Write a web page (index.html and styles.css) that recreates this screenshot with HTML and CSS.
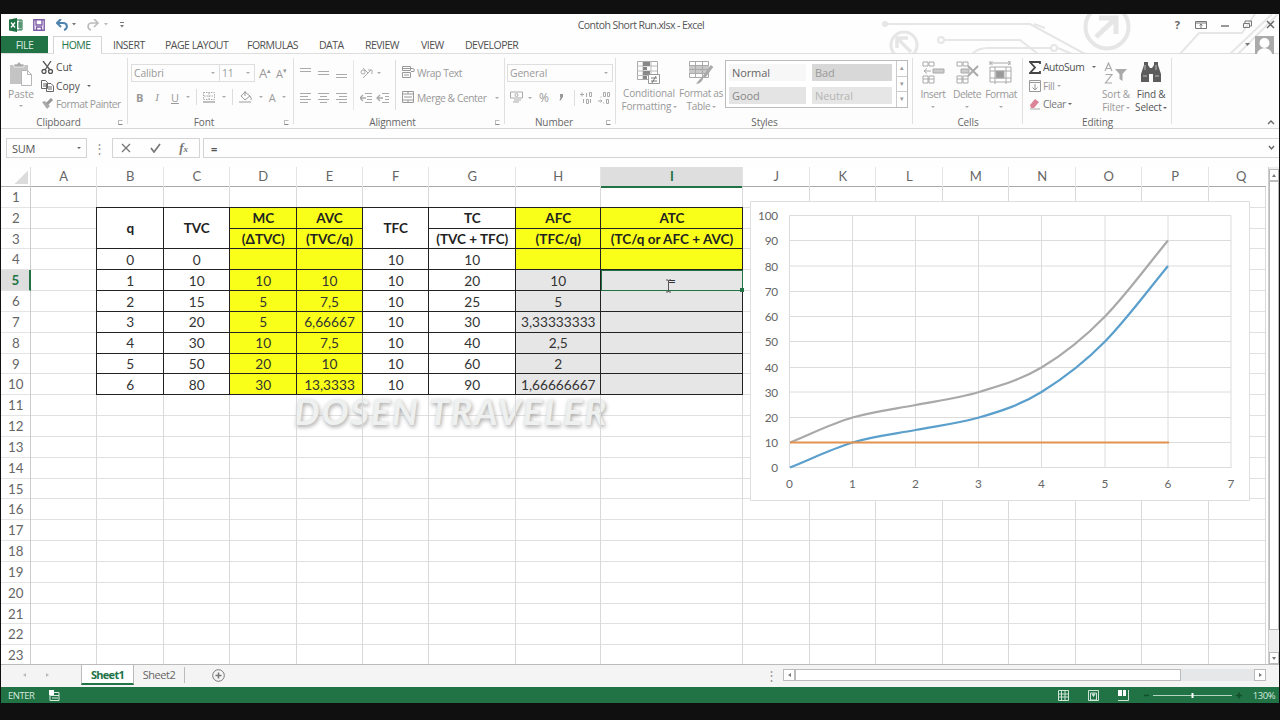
FILE: index.html
```html
<!DOCTYPE html>
<html lang="en">
<head>
<meta charset="utf-8">
<title>Contoh Short Run.xlsx - Excel</title>
<link rel="stylesheet" href="styles.css">
</head>
<body>
<div class="app">
  <header class="top">
    <svg class="circuit" width="400" height="40" viewBox="0 0 400 40" fill="none" stroke="#e6e6e6" stroke-width="2">
      <circle cx="24" cy="31" r="13" stroke-width="3"/><path d="M31 38 18 25M17 34V24H28" stroke-width="3.5"/>
      <path d="M5 10H150L205 40M64 26H140L158 40M92 40Q98 34 108 34H170M178 34 192 40M154 10 165 14"/>
      <circle cx="61" cy="26" r="3"/><circle cx="174" cy="34" r="3"/><circle cx="5" cy="10" r="3" fill="#e6e6e6" stroke="none"/>
      <circle cx="227" cy="13" r="21.500" stroke-width="4"/><path d="M216 23 235 5M219 4H236V20" stroke-width="5"/>
      <path d="M300 40 319 19H362L375 0M350 40 392 0M358 40 398 0"/>
    </svg>
    <div class="titlebar">
      <div class="quick">
        <svg width="14" height="14" viewBox="0 0 14 14"><path d="M7 2h6v10H7z" fill="#fff" stroke="#217346"/><path d="M9 5h4M9 7h4M9 9h4M11 2v10" stroke="#217346"/><path d="M0 1.500 8 0v14L0 12.500z" fill="#217346"/><path d="m2 4.500 4 5M6 4.500l-4 5" stroke="#fff" stroke-width="1.300"/></svg>
        <svg width="12" height="12" viewBox="0 0 12 12" fill="none" stroke="#7d5ba6" stroke-width="1.400"><path d="M.8.8h10.400v10.400H.8zM3 1v5h6V1M3.500 11V8h5v3"/></svg>
        <svg width="22" height="12" viewBox="0 0 22 12"><path d="M1 4h6c5 0 5 6 1 7M5 0 1 4l4 4" fill="none" stroke="#4f83ad" stroke-width="2"/><path d="m16 4 2 2.500L20 4z" fill="#777"/></svg>
        <svg width="22" height="12" viewBox="0 0 22 12"><path d="M11 4H5C0 4 0 10 4 11M7 0l4 4-4 4" fill="none" stroke="#bcbcbc" stroke-width="1.700"/><path d="m17 4 2 2.500L21 4z" fill="#bbb"/></svg>
        <svg width="6" height="8" viewBox="0 0 6 8"><path d="M1 1.500h4" stroke="#777"/><path d="M1 4h4L3 6.500z" fill="#777"/></svg>
      </div>
      <div class="doc">Contoh Short Run.xlsx - Excel</div>
      <div class="winctl">
        <b>?</b>
        <svg width="12" height="8" viewBox="0 0 12 8" fill="none" stroke="#777"><path d="M.5.5h11v7H.5zM.5 2h11M6 7V3M4.500 4.500 6 3l1.500 1.500"/></svg>
        <svg width="8" height="8" viewBox="0 0 8 8"><path d="M0 5h8" stroke="#777" stroke-width="1.500"/></svg>
        <svg width="9" height="9" viewBox="0 0 9 9" fill="none" stroke="#777"><path d="M.5 3.500h6v4h-6zM2 3V1h6.500v5H7"/></svg>
        <svg width="9" height="9" viewBox="0 0 9 9"><path d="m1 1 7 7M8 1 1 8" stroke="#666" stroke-width="1.400"/></svg>
      </div>
    </div>
    <nav class="tabs">
      <span class="file">FILE</span><span class="home">HOME</span><span class="t3">INSERT</span><span class="t4">PAGE LAYOUT</span><span class="t5">FORMULAS</span><span class="t6">DATA</span><span class="t7">REVIEW</span><span class="t8">VIEW</span><span class="t9">DEVELOPER</span>
      <svg class="user" width="30" height="20" viewBox="0 0 30 20"><path d="m0 8 2.500 3L5 8z" fill="#777"/><path d="M10 1h19v19H10z" fill="#aaa"/><circle cx="19.500" cy="8" r="5" fill="#fff"/><path d="M12 20c0-9 15-9 15 0z" fill="#fff"/></svg>
    </nav>
  </header>

  <section class="ribbon">
    <div class="group g-clip">
      <div class="body">
        <div class="big paste">
          <svg width="24" height="26" viewBox="0 0 24 26"><path d="M1 4h18v19H1z" fill="#c4c4c4"/><path d="M5 6V3h3q2-4 4 0h3v3z" fill="#aaa" stroke="#fff" stroke-width=".7"/><path d="M12.500 9.500h6l4 4v11h-10zM18.500 9.500v4h4" fill="#fff" stroke="#b5b5b5"/></svg>
          <span>Paste</span><i class="dn"></i>
        </div>
        <div class="stack">
          <div class="row dark"><svg width="13" height="13" viewBox="0 0 13 13" fill="none" stroke="#555" stroke-width="1.300"><path d="m2 0 7 9M10 0 4 9"/><circle cx="3" cy="10.500" r="2"/><circle cx="9.500" cy="10.500" r="2"/></svg><span>Cut</span></div>
          <div class="row dark"><svg width="13" height="12" viewBox="0 0 13 12" fill="#fff" stroke="#666"><path d="M.5.5h4l2 2v6h-6zM5.500 3.500h4.500l2.500 2.500v5.500h-7zM2 4h3M2 6h3M7 7h4M7 9h4"/></svg><span>Copy</span><i class="dn k"></i></div>
          <div class="row fp"><svg width="13" height="12" viewBox="0 0 13 12"><path d="m1 4 3-1 5 5-3 3z" fill="#aaa"/><path d="m6 6 5-5" stroke="#999" stroke-width="3"/></svg><span>Format Painter</span></div>
        </div>
      </div>
      <div class="label">Clipboard</div><i class="launch"></i>
    </div>

    <div class="group g-font">
      <div class="body col">
        <div class="row r1"><div class="combo fname">Calibri<i class="dn"></i></div><div class="combo fsize">11<i class="dn"></i></div><span class="grow">A<sup>▴</sup></span><span class="shrink">A<sup>▾</sup></span></div>
        <div class="row r2"><b>B</b><em>I</em><u>U</u><i class="dn"></i><i class="vr"></i>
          <svg width="12" height="11" viewBox="0 0 12 11" fill="none" stroke="#aaa"><path d="M.5.500h11v7H.5zM6 1v6M1 4h10" stroke-dasharray="1.500 1"/><path d="M0 10h12" stroke-width="1.500"/></svg><i class="dn"></i><i class="vr"></i>
          <svg width="13" height="12" viewBox="0 0 13 12" fill="none" stroke="#999"><path d="m6 1 5 4-5 4-4-4zM6 5V0M11 5q2 3 1 4"/><path d="M0 11h12" stroke="#ccc" stroke-width="2"/></svg><i class="dn"></i>
          <span class="fc">A</span><i class="dn"></i></div>
      </div>
      <div class="label">Font</div><i class="launch"></i>
    </div>

    <div class="group g-align">
      <div class="body">
        <div class="acol a1">
          <div class="row"><svg width="48" height="12" viewBox="0 0 48 12" stroke="#aaa"><path d="M0 1.500h11M0 4.500h11M18 4.500h11M18 7.500h11M36 7.500h11M36 10.500h11"/></svg></div>
          <div class="row"><svg width="48" height="10" viewBox="0 0 48 10" stroke="#aaa"><path d="M0 .5h11M0 3.500h8M0 6.500h11M0 9.500h8M18 .5h11M20 3.500h7M18 6.500h11M20 9.500h7M36 .5h11M39 3.500h8M36 6.500h11M39 9.500h8"/></svg></div>
        </div>
        <div class="acol a2">
          <div class="row"><svg width="14" height="12" viewBox="0 0 14 12" fill="none" stroke="#aaa"><path d="m3 11 8-8M8 3h4v4"/><circle cx="3" cy="5" r="2"/><path d="m3 1 5 5"/></svg><i class="dn"></i></div>
          <div class="row"><svg width="30" height="10" viewBox="0 0 30 10" stroke="#aaa" fill="none"><path d="M5 .5h7M7 3.500h5M7 6.500h5M5 9.500h7M22 .5h7M25 3.500h4M25 6.500h4M22 9.500h7"/><path d="M0 5h6M3 2 0 5l3 3M17 5h6M20 2l-3 3 3 3" stroke-width="1.300"/></svg></div>
        </div>
        <div class="acol a3">
          <div class="row"><svg width="13" height="13" viewBox="0 0 13 13" fill="none" stroke="#999"><path d="M.5.500h8v4h-8zM.5 6.500h8v5h-8zM0 2.500h11q2 0 1 3H9M2 9h5"/></svg><span>Wrap Text</span></div>
          <div class="row"><svg width="13" height="13" viewBox="0 0 13 13" fill="none" stroke="#999"><path d="M.5.500h11v11H.5zM.5 3h11M.5 9h11M6 0v3M6 9v3M2 6h8"/></svg><span>Merge &amp; Center</span><i class="dn"></i></div>
        </div>
      </div>
      <div class="label">Alignment</div><i class="launch"></i>
    </div>

    <div class="group g-num">
      <div class="body col">
        <div class="combo gen">General<i class="dn"></i></div>
        <div class="row nr"><svg width="13" height="13" viewBox="0 0 13 13" fill="none" stroke="#aaa"><path d="M.5 1h12v6H.5z"/><circle cx="6.500" cy="4" r="1.500"/><path d="M4 9h7M3 11h6"/></svg><i class="dn"></i><b class="pct">%</b><svg class="comma" width="4" height="7" viewBox="0 0 4 7"><path d="M1 0h3v3L1.500 6.500H.5L1.500 3H1z" fill="#999"/></svg><i class="vr"></i>
          <svg class="dec" width="12" height="12" viewBox="0 0 12 12" fill="none" stroke="#aaa"><path d="M0 2.500h4M2 .5v4M6.500 1v4M9.500.5h2v4h-2zM3.500 7v4M6.500 7.500h2v4h-2zM10.500 7v4"/></svg>
          <svg class="dec" width="12" height="12" viewBox="0 0 12 12" fill="none" stroke="#aaa"><path d="M3 4.500v1M5.500.5h2v4h-2zM9.500.5h2v4h-2zM0 9h4M2.500 7.500 4 9l-1.500 1.500M5.500 10.500v1M8.500 7.500h2v4h-2z"/></svg></div>
      </div>
      <div class="label">Number</div><i class="launch"></i>
    </div>

    <div class="group g-styles">
      <div class="body">
        <div class="big cf"><svg width="24" height="24" viewBox="0 0 24 24"><path d="M.5.500h20v18H.5z" fill="#fff" stroke="#aaa"/><path d="M0 5h20M0 10h20M0 14.500h20M6 0v18M14 0v18" stroke="#bbb"/><path d="M6 1h7v4H6zM6 6h4v3H6zM6 10h7v4H6zM6 15h4v3H6z" fill="#888"/><path d="M11.500 13.500h11v9h-11z" fill="#fff" stroke="#999"/><path d="M14 17h6M14 20h6M19 15l-4 7" stroke="#777"/></svg><span>Conditional<br>Formatting <i class="dn in"></i></span></div>
        <div class="big ft"><svg width="24" height="24" viewBox="0 0 24 24"><path d="M.5.500h19v16H.5z" fill="#fff" stroke="#aaa"/><path d="M0 5h20v7H0z" fill="#c8c8c8"/><path d="M0 4.500h20M0 8.500h20M0 12.500h20M6.500 0v17M13.500 0v17" stroke="#aaa"/><path d="m23 5-8 11" stroke="#aaa" stroke-width="3"/><path d="M15 15q-2 8-8 8 4-6 8-8" fill="#aaa"/></svg><span>Format as<br>Table <i class="dn in"></i></span></div>
        <div class="gallery">
          <div class="swatches"><span class="s1">Normal</span><span class="s2">Bad</span><span class="s3">Good</span><span class="s4">Neutral</span></div>
          <div class="scroller"><i>▴</i><i>▾</i><i>▾</i></div>
        </div>
      </div>
      <div class="label">Styles</div>
    </div>

    <div class="group g-cells">
      <div class="body">
        <div class="big"><svg width="23" height="24" viewBox="0 0 23 24" fill="#fff" stroke="#aaa"><path d="M1 1h5v4H1zM7 1h5v4H7zM1 15h5v7H1zM7 15h5v7H7zM1 18h11"/><path d="M11 8h11v4H11z" fill="#ccc"/><path d="M9 10H2M5 7.500 2 10l3 2.500"/></svg><span>Insert</span><i class="dn"></i></div>
        <div class="big"><svg width="23" height="24" viewBox="0 0 23 24" fill="#fff" stroke="#aaa"><path d="M1 1h5v4H1zM7 1h5v4H7zM1 15h5v7H1zM7 15h5v7H7zM1 18h11"/><path d="M5 8h8v4H5z" fill="#ccc"/><path d="m12 5 10 10M22 5 12 15" stroke-width="2"/></svg><span>Delete</span><i class="dn"></i></div>
        <div class="big"><svg width="24" height="24" viewBox="0 0 24 24" fill="#fff" stroke="#aaa"><path d="M1 2h20M1 0v4M21 0v4M3.500.500 1.500 2l2 2M19 0l2 2-2 2"/><path d="M1 6h21v15H1zM1 10h21M1 17h21M6 6v17M17 6v17"/><path d="M7 10h8v7H7z" fill="#999"/></svg><span>Format</span><i class="dn"></i></div>
      </div>
      <div class="label">Cells</div>
    </div>

    <div class="group g-edit">
      <div class="body">
        <div class="stack">
          <div class="row dark"><svg width="12" height="13" viewBox="0 0 12 13"><path d="M11 3V1H1l5 5.500L1 12h10v-2" fill="none" stroke="#444" stroke-width="1.800"/></svg><span>AutoSum</span><i class="dn k far"></i></div>
          <div class="row"><svg width="12" height="12" viewBox="0 0 12 12" fill="none" stroke="#999"><path d="M.5.500h11v11H.5zM.5 2.500h11M6 4v6M3.500 7.500 6 10l2.500-2.500"/></svg><span>Fill</span><i class="dn"></i></div>
          <div class="row mid"><svg width="12" height="11" viewBox="0 0 12 11"><path d="m1 6 5-6 4 3-5 6-3 0z" fill="#dc8497"/><path d="M1 10h10" stroke="#aaa"/></svg><span>Clear</span><i class="dn k"></i></div>
        </div>
        <div class="big sort"><svg width="24" height="22" viewBox="0 0 24 22" fill="none" stroke="#aaa" stroke-width="1.200"><path d="m1 9 3.500-8L8 9M2.500 6.500h4M1.500 12.500H8L1.500 21H8"/><path d="M11 7h12l-4.500 5v7L15.500 17v-5z" fill="#aaa" stroke="none"/></svg><span>Sort &amp;<br>Filter <i class="dn in"></i></span></div>
        <div class="big find"><svg width="22" height="21" viewBox="0 0 22 21" fill="#5c5c5c"><path d="M4 0h4v3l2 3h2l2-3V0h4v3l3 9v8h-8v-8H9v8H1v-8l3-9z"/><path d="M5 3v5M16 3v5M3 14h4M15 14h4" stroke="#bbb"/></svg><span>Find &amp;<br>Select <i class="dn k in"></i></span></div>
      </div>
      <div class="label">Editing</div>
    </div>
    <svg class="collapse" width="8" height="6" viewBox="0 0 8 6"><path d="m1 5 3-3 3 3" fill="none" stroke="#666" stroke-width="1.300"/></svg>
  </section>

  <section class="formula">
    <div class="namebox">SUM<i class="dn k"></i></div>
    <span class="dots">⋮</span>
    <div class="fbtns">
      <svg width="10" height="10" viewBox="0 0 10 10"><path d="m1 1 8 8M9 1 1 9" stroke="#777" stroke-width="1.300"/></svg>
      <svg width="11" height="10" viewBox="0 0 11 10"><path d="m1 5 3 4 6-8" fill="none" stroke="#777" stroke-width="1.700"/></svg>
      <em>f<small>x</small></em>
    </div>
    <div class="finput"><b>=</b><svg width="7" height="6" viewBox="0 0 7 6"><path d="m1 1 2.500 3L6 1" fill="none" stroke="#666" stroke-width="1.400"/></svg></div>
  </section>

  <main class="work">
    <div class="sheet">
      <div class="corner"></div>
      <div class="colheads"><span>A</span><span>B</span><span>C</span><span>D</span><span>E</span><span>F</span><span>G</span><span>H</span><span class="on">I</span><span>J</span><span>K</span><span>L</span><span>M</span><span>N</span><span>O</span><span>P</span><span>Q</span></div>
      <div class="rowheads"><span>1</span><span>2</span><span>3</span><span>4</span><span class="on">5</span><span>6</span><span>7</span><span>8</span><span>9</span><span>10</span><span>11</span><span>12</span><span>13</span><span>14</span><span>15</span><span>16</span><span>17</span><span>18</span><span>19</span><span>20</span><span>21</span><span>22</span><span>23</span></div>
      <div class="watermark">DOSEN TRAVELER</div>
      <div class="vlines"><i></i><i></i><i></i><i></i><i></i><i></i><i></i><i></i><i></i><i></i><i></i><i></i><i></i><i></i><i></i><i></i><i></i></div>
      <div class="hlines"><i></i><i></i><i></i><i></i><i></i><i></i><i></i><i></i><i></i><i></i><i></i><i></i><i></i><i></i><i></i><i></i><i></i><i></i><i></i><i></i><i></i><i></i><i></i></div>
      <div class="data">
        <b class="two">q</b><b class="two">TVC</b><b class="y">MC</b><b class="y">AVC</b><b class="two">TFC</b><b>TC</b><b class="y">AFC</b><b class="y">ATC</b>
        <b class="y">(ΔTVC)</b><b class="y">(TVC/q)</b><b>(TVC + TFC)</b><b class="y">(TFC/q)</b><b class="y">(TC/q or AFC + AVC)</b>
        <span>0</span><span>0</span><span class="y"></span><span class="y"></span><span>10</span><span>10</span><span class="y"></span><span class="y"></span>
        <span>1</span><span>10</span><span class="y">10</span><span class="y">10</span><span>10</span><span>20</span><span class="g">10</span><span class="g active">=<svg class="ibeam" width="7" height="14" viewBox="0 0 7 14"><path d="M1 1h2l.5 1L4 1h2M3.500 2v10M1 13h2l.5-1 .5 1h2" fill="none" stroke="#555"/></svg></span>
        <span>2</span><span>15</span><span class="y">5</span><span class="y">7,5</span><span>10</span><span>25</span><span class="g">5</span><span class="g"></span>
        <span>3</span><span>20</span><span class="y">5</span><span class="y">6,66667</span><span>10</span><span>30</span><span class="g">3,33333333</span><span class="g"></span>
        <span>4</span><span>30</span><span class="y">10</span><span class="y">7,5</span><span>10</span><span>40</span><span class="g">2,5</span><span class="g"></span>
        <span>5</span><span>50</span><span class="y">20</span><span class="y">10</span><span>10</span><span>60</span><span class="g">2</span><span class="g"></span>
        <span>6</span><span>80</span><span class="y">30</span><span class="y">13,3333</span><span>10</span><span>90</span><span class="g">1,66666667</span><span class="g"></span>
      </div>
      <svg class="chart" width="500" height="300" viewBox="750 201 500 300">
        <path d="M750.500 201.500h499v299h-499z" fill="#fff" stroke="#dedede"/>
        <path d="M789.500 215.500H1231M789.500 240.500H1231M789.500 266H1231M789.500 291.500H1231M789.500 316.500H1231M789.500 341.500H1231M789.500 367.500H1231M789.500 392H1231M789.500 417.500H1231M789.500 442.500H1231M789.500 467.500H1231M789.500 215.500V468M852.500 215.500V468M915.500 215.500V468M978.500 215.500V468M1041.500 215.500V468M1105 215.500V468M1168 215.500V468M1231 215.500V468" fill="none" stroke="#dcdcdc"/>
        <g fill="none" stroke-width="2.200">
          <path d="M790 467.500C811 459 831.500 449 852.500 442.500S894.500 434 915.500 430 958 423.500 979 417.500 1020.500 405 1041.500 392 1084 363 1105 341.500 1147 291.500 1168 266" stroke="#5b9fcc"/>
          <path d="M790 442.500C811 434 831.500 423.500 852.500 417.500S894.500 409 915.500 405 958 398.500 979 392 1020.500 380 1041.500 367.500 1084 338 1105 316.500 1147 266 1168 240.500" stroke="#a9a9a9"/>
          <path d="M790 442.500H1169" stroke="#e3924f"/>
        </g>
        <g class="ylab"><text x="778" y="220">100</text><text x="778" y="245">90</text><text x="778" y="270.500">80</text><text x="778" y="295.500">70</text><text x="778" y="321">60</text><text x="778" y="346">50</text><text x="778" y="371.500">40</text><text x="778" y="396.500">30</text><text x="778" y="422">20</text><text x="778" y="447">10</text><text x="778" y="472">0</text></g>
        <g class="xlab"><text x="789.500" y="488">0</text><text x="852.500" y="488">1</text><text x="915.500" y="488">2</text><text x="978.500" y="488">3</text><text x="1041.500" y="488">4</text><text x="1105" y="488">5</text><text x="1168" y="488">6</text><text x="1231" y="488">7</text></g>
      </svg>
    </div>
    <div class="vscroll"><i class="up"></i><i class="thumb"></i><i class="down"></i></div>
  </main>

  <footer class="sheetbar">
    <span class="nav"><i></i><i></i></span>
    <span class="st on">Sheet1</span><span class="st">Sheet2</span>
    <svg class="add" width="13" height="13" viewBox="0 0 13 13" fill="none" stroke="#777"><circle cx="6.500" cy="6.500" r="5.800"/><path d="M3.500 6.500h6M6.500 3.500v6" stroke-width="1.500"/></svg>
    <span class="dots hd">⋮</span>
    <div class="hscroll"><i class="lf"></i><i class="hthumb"></i><i class="rt"></i></div>
  </footer>
  <div class="status">
    <span>ENTER</span>
    <svg width="11" height="11" viewBox="0 0 11 11"><path d="M1 2.500h9v8H1zM1 5.500h9M3 8h6" fill="none" stroke="#d8eadf"/><path d="M0 0h5v5H0z" fill="#fff"/></svg>
    <div class="views">
      <svg width="11" height="11" viewBox="0 0 11 11" fill="none" stroke="#cfe4d7"><path d="M.5.500h10v10H.5zM0 4h11M0 7h11M3.500 0v11M7 0v11"/></svg>
      <svg width="11" height="11" viewBox="0 0 11 11" fill="none" stroke="#cfe4d7"><path d="M.5.500h10v10H.5zM2.500 3h6v7h-6z"/><path d="M4 4h3L5.500 6.500z" fill="#cfe4d7"/></svg>
      <svg width="11" height="11" viewBox="0 0 11 11"><path d="M0 0h4v6H0zM5 0h3v6H5z" fill="#fff"/><path d="M10.500 0v10.500H0" fill="none" stroke="#cfe4d7"/></svg>
    </div>
    <svg class="zoom" width="98" height="9" viewBox="0 0 98 9"><path d="M0 4.500h5M92 4.500h6M95 1.500v6" stroke="#0f4d2b" stroke-width="1.500"/><path d="M9 4.500h79" stroke="#b5d3c1"/><path d="M48.500 2v5" stroke="#fff" stroke-width="2"/></svg>
    <span class="pc">130%</span>
  </div>
</div>
</body>
</html>
```
FILE: styles.css
```css
* { box-sizing: border-box; }
body { margin: 0; background: #101010; font-family: "Open Sans", "Noto Sans", sans-serif; font-size: 10.5px; color: #555; }
.app { width: 1280px; height: 720px; padding: 14px 1px 17px 1px; display: flex; flex-direction: column; overflow: hidden; }
svg { flex: none; display: block; }
i { font-style: normal; }
.top { height: 40px; background: #fefefe; position: relative; flex: none; }
.circuit { position: absolute; left: 879px; top: 0; }
.titlebar { height: 22px; display: flex; align-items: center; position: relative; margin-top: -1px; padding-top: 1px; margin-bottom: 1px; }
.quick { display: flex; align-items: center; padding-left: 8px; width: 520px; }
.quick svg:nth-child(2) { margin-left: 10px; }
.quick svg:nth-child(3) { margin-left: 11px; }
.quick svg:nth-child(4) { margin-left: 9px; }
.quick svg:nth-child(5) { margin-left: 10px; }
.doc { width: 240px; text-align: center; font-size: 10.5px; letter-spacing: -.55px; }
.winctl { margin-left: auto; display: flex; align-items: center; gap: 14px; padding-right: 4px; }
.winctl b { font-size: 11px; margin-right: 1px; color: #666; }
.tabs { display: flex; height: 18px; line-height: 18px; font-size: 10.5px; letter-spacing: -.5px; border-bottom: 1px solid #dedede; position: relative; white-space: nowrap; color: #505050; }
.tabs span { flex: none; }
.file { width: 47px; background: #217346; color: #dcebe2; text-align: center; }
.home { width: 49px; margin-left: 5px; text-align: center; color: #217346; border: 1px solid #d4d4d4; border-bottom: 0; background: #fff; height: 19px; line-height: 17px; padding-right: 3px; }
.t3 { width: 52px; margin-left: 11px; }
.t4 { width: 82px; }
.t5 { width: 72px; }
.t6 { width: 46px; }
.t7 { width: 56px; }
.t8 { width: 44px; }
.user { margin: -1px 4px 0 auto; }

.ribbon { height: 75px; background: #fdfdfd; display: flex; border-bottom: 1px solid #d6d6d6; flex: none; color: #999; letter-spacing: -.1px; position: relative; white-space: nowrap; font-size: 10.300px; }
.group { display: flex; flex-direction: column; position: relative; flex: none; height: 74px; }
.group::after { content: ""; position: absolute; right: 0; top: 4px; bottom: 4px; width: 1px; background: #e0e0e0; }
.body { height: 62px; display: flex; }
.body.col { flex-direction: column; }
.label { height: 12px; line-height: 12px; text-align: center; color: #666; font-size: 10px; }
.launch { position: absolute; right: 5px; bottom: 3px; width: 5px; height: 5px; border: 1px solid #bbb; border-right-color: transparent; border-bottom-color: #888; }
.row { display: flex; align-items: center; }
.dark { color: #505050; }
.mid { color: #777; }
.dn { display: inline-block; width: 0; height: 0; border: 2px solid transparent; border-top: 2.500px solid #aaa; border-bottom: 0; flex: none; }
.dn.k { border-top-color: #666; }
.dn.in { vertical-align: middle; margin-left: -1px; }
.vr { width: 1px; height: 16px; background: #ddd; }
.big { display: flex; flex-direction: column; align-items: center; text-align: center; line-height: 13px; }
.g-clip { width: 127px; }
.g-clip .label { width: 115px; }
.paste { width: 40px; padding-top: 7px; }
.paste span { margin: 1px 0 4px; }
.g-clip .stack { padding-top: 4px; }
.stack .row { height: 18.500px; gap: 2px; }
.g-clip .stack .dn { margin-left: 5px; }
.g-clip .fp { letter-spacing: -.65px; }
.fp span { letter-spacing: -.5px; }

.g-font { width: 166px; }
.g-font .label { width: 152px; }
.r1 { padding: 10px 0 0 3px; height: 28px; }
.combo { border: 1px solid #dedede; height: 18px; display: flex; align-items: center; justify-content: space-between; padding: 0 4px 0 2px; }
.fname { width: 89px; }
.fsize { width: 35px; border-left: 0; }
.grow { font-size: 13px; margin-left: 4px; }
.shrink { font-size: 11px; margin-left: 5px; }
.r1 sup { font-size: 7px; line-height: 0; }
.r2 { padding-left: 8px; height: 30px; font-size: 11px; }
.r2 em { margin-left: 12px; font-family: "Liberation Serif", serif; }
.r2 u { margin-left: 12px; }
.r2 .dn { margin-left: 7px; }
.r2 .vr { margin: 0 6px 0 6px; }
.r2 .fc { margin-left: 6px; }
.r2 .fc + .dn { margin-left: 6px; }

.g-align { width: 211px; }
.g-align .label { width: 197px; }
.acol { display: flex; flex-direction: column; }
.acol .row { height: 25px; }
.a1 { margin-left: 6px; width: 53px; padding-top: 6px; }
.a2 { width: 42px; padding-left: 6px; border-left: 1px solid #e6e6e6; margin: 6px 0; }
.a2 .dn { margin-left: 3px; }
.a3 { border-left: 1px solid #ddd; padding: 0 0 0 6px; margin: 6px 0; }
.a3 .row { gap: 2px; letter-spacing: -.45px; }
.a3 .dn { margin-left: 7px; }
.g-num { width: 111px; }
.g-num .label { width: 98px; }
.gen { margin: 10px 3px 0 2px; flex: none; }
.nr { height: 31px; padding-left: 5px; }
.nr .dn { margin-left: 5px; }
.pct { margin-left: 7px; font-size: 12px; font-weight: 400; }
.comma { margin: 0 0 0 10px; }
.nr .vr { margin: 0 5px 0 11px; }
.dec + .dec { margin-left: 6px; }

.g-styles { width: 297px; }
.g-styles .label { width: 297px; }
.cf { width: 66px; padding-top: 7px; }
.ft { width: 38px; padding-top: 7px; }
.ft span { margin-top: 2px; letter-spacing: -.3px; font-size: 10px; }
.cf span { margin-top: 2px; letter-spacing: -.15px; font-size: 10px; }
.gallery { margin: 6px 0 0 5px; width: 183px; height: 48px; border: 1px solid #bbb; display: flex; background: #fff; }
.swatches { display: grid; grid-template-columns: 77px 80px; gap: 6px 6px; padding: 3px; width: 171px; line-height: 17px; font-size: 11px; height: 44px; }
.swatches span { padding-left: 3px; height: 17px; }
.s1 { background: #f7f7f7; color: #666; }
.s2 { background: #d8d8d8; }
.s3 { background: #e4e4e4; color: #888; }
.s4 { background: #e6e6e6; color: #b5b5b5; }
.scroller { width: 11px; border-left: 1px solid #ccc; display: grid; font-size: 7px; text-align: center; line-height: 14px; }
.scroller i + i { border-top: 1px solid #ccc; }

.g-cells { width: 110px; }
.g-cells .big { width: 34px; padding-top: 7px; letter-spacing: -.5px; }
.g-cells .big:first-child { margin-left: 3px; }
.g-cells .big span { margin: 3px 0 5px; }
.g-edit { width: 149px; }
.g-edit .stack { padding: 4px 0 0 6px; width: 73px; letter-spacing: -.4px; }
.g-edit .far { margin-left: 6px; }
.sort { width: 40px; padding-top: 8px; }
.find { width: 30px; padding-top: 8px; color: #555; }
.sort span, .find span { font-size: 10px; letter-spacing: -.2px; }
.sort span { margin-top: 4px; }
.find span { margin-top: 5px; }
.collapse { margin: 65px 4px 0 auto; }

.formula { height: 38px; background: #fefefe; display: flex; align-items: center; flex: none; font-size: 11px; }
.namebox { width: 81px; height: 20px; margin-left: 5px; border: 1px solid #d4d4d4; display: flex; align-items: center; justify-content: space-between; padding: 0 5px; letter-spacing: -.3px; }
.dots { width: 25px; text-align: center; font-size: 13px; color: #999; }
.fbtns { width: 88px; height: 20px; border: 1px solid #d4d4d4; display: flex; align-items: center; justify-content: space-between; padding: 0 11px 0 8px; }
.fbtns em { font: italic bold 13px "Liberation Serif", serif; color: #777; }
.fbtns small { font-size: 9px; }
.finput { flex: 1; height: 20px; margin-left: 3px; border: 1px solid #d4d4d4; border-right: 0; display: flex; align-items: center; justify-content: space-between; padding: 0 4px 0 7px; }

.work { height: 497px; display: flex; flex: none; background: #fff; overflow: hidden; }
.sheet { width: 1265px; height: 500px; flex: none; position: relative; display: grid; font-family: Lato, "Open Sans", sans-serif;
  grid-template-columns: 29.500px 66.500px 66.500px 66.500px 66.500px 66px 66.500px 86.500px 85.500px 142px 66.500px 66.500px 66.500px 66.500px 66.500px 66.500px 66.500px 57.500px;
  grid-template-rows: 20px repeat(23, 20.830px); }
.corner { grid-area: 1 / 1; background: linear-gradient(135deg, transparent 50%, #dcdcdc 50%) 14px 4px / 13px 13px no-repeat; border-bottom: 1px solid #b0b0b0; border-right: 1px solid #ddd; }
.colheads { grid-area: 1 / 2 / 2 / 19; display: grid; grid-template-columns: subgrid; border-bottom: 1px solid #aaa; font-size: 13px; line-height: 19px; text-align: center; color: #666; }
.colheads span { border-right: 1px solid #e4e4e4; padding-left: 1px; }
.colheads span:last-child { padding-left: 8px; border-right: 0; }
.colheads .on { background: #dedede; color: #217346; border-bottom: 2px solid #217346; margin-bottom: -1px; font-weight: 700; }
.rowheads { grid-area: 2 / 1 / 25 / 2; display: grid; grid-template-rows: subgrid; border-right: 1px solid #ccc; font-size: 13.300px; line-height: 21px; text-align: center; color: #666; }
.rowheads span { border-bottom: 1px solid #e4e4e4; padding-left: 1px; }
.rowheads .on { background: #dedede; color: #217346; border-right: 2px solid #217346; margin-right: -1px; font-weight: 700; }
.vlines { grid-area: 2 / 2 / 25 / 19; display: grid; grid-template-columns: subgrid; position: relative; }
.vlines i { border-right: 1px solid #d9d9d9; }
.hlines { grid-area: 2 / 2 / 25 / 19; display: grid; grid-template-rows: subgrid; }
.hlines i { border-bottom: 1px solid #e0e0e0; }
.data { grid-area: 3 / 3 / 12 / 11; display: grid; grid-template-columns: subgrid; grid-template-rows: subgrid; margin: -1px 0 0 -1px; border: 1px solid #222; border-right: 0; border-bottom: 0; background: #fff; font-size: 13.700px; color: #333; white-space: nowrap; position: relative; }
.data > * { border-right: 1px solid #222; border-bottom: 1px solid #222; display: flex; align-items: center; justify-content: center; min-width: 0; min-height: 0; padding-left: 1px; }
.data b { color: #222; font-size: 13.500px; }
.data .two { grid-row: span 2; }
.data .y { background: #f9ff18; }
.data .g { background: #e6e6e6; }
.data .active { position: relative; outline: 1.500px solid #217346; outline-offset: -1px; }
.active::after { content: ""; position: absolute; right: -2px; bottom: -2px; width: 4px; height: 4px; background: #217346; }
.ibeam { position: absolute; left: 64px; top: 9px; }
.watermark { position: absolute; left: 293px; top: 231px; font: italic bold 36px/27px Lato, sans-serif; color: #eef1f0; text-shadow: 1px 2px 4px #a4a4a4; white-space: nowrap; letter-spacing: 1.950px; }
.chart { position: absolute; left: 749px; top: 34px; font-size: 11.800px; }
.chart text { fill: #666; }
.ylab { text-anchor: end; letter-spacing: -.2px; }
.xlab { text-anchor: middle; }
.vscroll { flex: 1; border-left: 1px solid #ccc; display: flex; flex-direction: column; background: #eee; margin-left: 2px; }
.vscroll i { border: 1px solid #bbb; background: #fff; }
.up, .down { height: 12px; display: grid; place-items: center; }
.vscroll .up { margin-top: 2px; }
.up::after, .down::after { content: ""; border: 2.500px solid transparent; border-top: 0; border-bottom: 3px solid #777; }
.down::after { transform: rotate(180deg); }
.thumb { height: 449px; margin-bottom: auto; }

.sheetbar { height: 23px; background: #f4f4f4; border-top: 1px solid #bbb; display: flex; align-items: center; flex: none; padding-bottom: 2px; }
.nav { width: 80px; padding-left: 22px; display: flex; gap: 20px; }
.nav i { border: 2.500px solid transparent; border-right: 3px solid #bbb; border-left: 0; }
.nav i + i { transform: rotate(180deg); }
.st { width: 51px; height: 16px; line-height: 16px; text-align: center; font-size: 11px; letter-spacing: -.5px; border-right: 1px solid #bbb; color: #666; }
.st.on { width: 53px; height: 20px; line-height: 19px; background: #fff; border-left: 1px solid #bbb; border-bottom: 2px solid #217346; color: #217346; font-weight: 700; letter-spacing: -.7px; }
.add { margin-left: 27px; }
.hd { margin-left: auto; width: 10px; }
.hscroll { width: 483px; height: 12px; margin: 0 13px 0 8px; display: flex; background: #e5e7e8; }
.hscroll i { border: 1px solid #bbb; background: #fff; }
.lf, .rt { width: 12px; display: grid; place-items: center; }
.lf::after, .rt::after { content: ""; border: 2.500px solid transparent; border-left: 0; border-right: 3px solid #777; }
.rt::after { transform: rotate(180deg); }
.hthumb { width: 386px; margin-right: auto; }
.status { height: 16px; background: #217346; display: flex; align-items: center; color: #d5e8dc; font-size: 9.500px; letter-spacing: -.5px; padding: 0 4px 0 7px; flex: none; }
.status > svg { margin-left: 15px; }
.views { margin-left: auto; display: flex; gap: 19px; }
.status .zoom { margin: 0 11px 0 15px; }
```
